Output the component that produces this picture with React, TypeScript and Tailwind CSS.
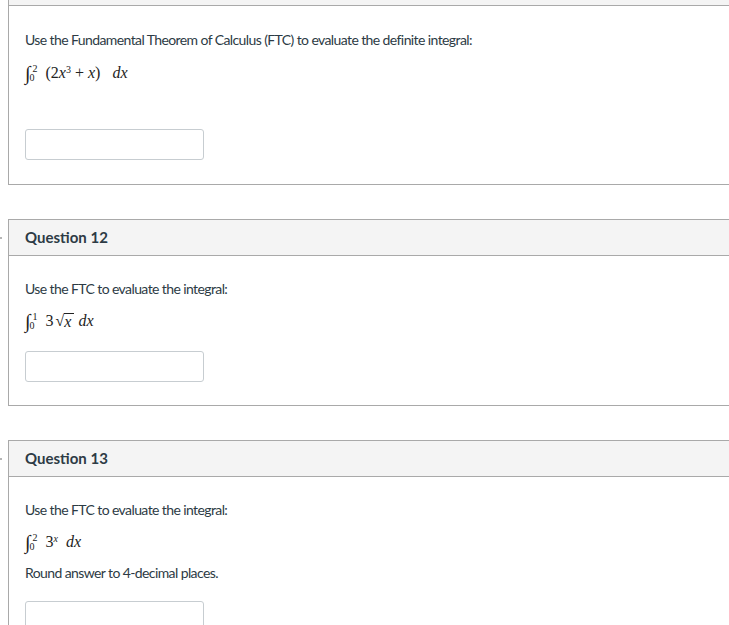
import type { ReactNode } from "react";

const math = "font-['Liberation_Serif',serif] text-[16px] text-[#222] tracking-normal";

function Int({ lo, hi }: { lo: string; hi: string }) {
  return (
    <span className="inline-flex items-center mr-[8px]">
      <span className="text-[20px] italic leading-none">∫</span>
      <span className="flex flex-col text-[10px] leading-[9px] -ml-[1px]">
        <span className="ml-[3px]">{hi}</span>
        <span>{lo}</span>
      </span>
    </span>
  );
}

function Card({
  title,
  children,
  cut,
}: {
  title?: string;
  children: ReactNode;
  cut?: boolean;
}) {
  return (
    <div
      className={`relative ml-2 w-[740px] border border-[#a9a9a9] border-r-0 bg-white ${cut ? "border-t-0" : ""}`}
    >
      {cut ? (
        <div className="h-[6px] bg-[#f4f4f4] border-b border-[#a9a9a9]" />
      ) : (
        <div className="relative h-[36px] bg-[#f4f4f4] border-b border-[#a9a9a9] pl-4 flex items-center">
          <span className="absolute left-[-9px] top-[17px] h-[2px] w-[2px] bg-[#b5b5b5]" />
          <h2 className="text-[15px] font-bold text-[#2d3b45]">{title}</h2>
        </div>
      )}
      <div
        className={`px-4 text-[14px] text-[#2d3b45] tracking-[-0.6px] ${cut ? "pt-6 pb-6" : "pt-[23px] pb-[23px]"}`}
      >
        {children}
      </div>
    </div>
  );
}

function Answer({ className = "" }: { className?: string }) {
  return (
    <div
      className={`h-[31px] w-[179px] rounded-[3px] border border-[#c7cdd1] bg-white ${className}`}
    />
  );
}

export default function App() {
  return (
    <div className="h-[625px] w-[729px] overflow-hidden bg-white font-['Lato','Liberation_Sans',sans-serif]">
      <Card cut>
        <p className="leading-5">
          Use the Fundamental Theorem of Calculus (FTC) to evaluate the definite integral:
        </p>
        <div className={`mt-[13px] h-5 flex items-center ${math}`}>
          <Int lo="0" hi="2" />
          <span>
            (2<i>x</i>
            <sup className="text-[10px]">3</sup>&nbsp;+&nbsp;<i>x</i>)&nbsp;&nbsp;&nbsp;<i>dx</i>
          </span>
        </div>
        <Answer className="mt-[46px]" />
      </Card>

      <div className="mt-[34px]">
        <Card title="Question 12">
          <p className="leading-5">Use the FTC to evaluate the integral:</p>
          <div className={`mt-3 h-5 flex items-center ${math}`}>
            <Int lo="0" hi="1" />
            <span className="flex items-center">
              3
              <span className="ml-[2px] text-[16px] leading-none">√</span>
              <i className="border-t border-[#222] leading-[15px] pr-[3px]">x</i>
              <i className="ml-[4px]">dx</i>
            </span>
          </div>
          <Answer className="mt-5" />
        </Card>
      </div>

      <div className="mt-[34px]">
        <Card title="Question 13">
          <p className="leading-5">Use the FTC to evaluate the integral:</p>
          <div className={`mt-3 h-5 flex items-center ${math}`}>
            <Int lo="0" hi="2" />
            <span>
              3<sup className="text-[10px] italic">x</sup>&nbsp;&nbsp;<i>dx</i>
            </span>
          </div>
          <p className="mt-[11px] leading-5">Round answer to 4-decimal places.</p>
          <Answer className="mt-[18px]" />
        </Card>
      </div>
    </div>
  );
}
